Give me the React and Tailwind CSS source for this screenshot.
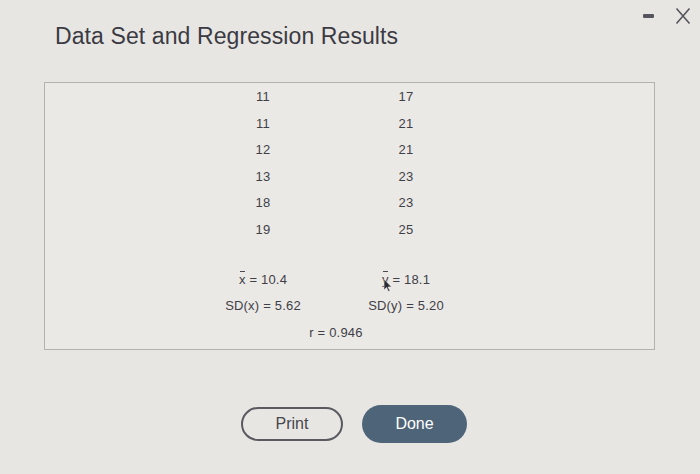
const xs = [11, 11, 12, 13, 18, 19];
const ys = [17, 21, 21, 23, 23, 25];

function Bar({ children }) {
  return (
    <span className="relative inline-block">
      <span className="absolute left-[1px] right-[1px] top-[4px] h-[1px] bg-[#4a4a52]" />
      {children}
    </span>
  );
}

export default function App() {
  return (
    <div
      className="relative w-[700px] h-[474px] overflow-hidden bg-[#e8e6e2] text-[#3f3f47]"
      style={{ fontFamily: '"Liberation Sans", Arial, sans-serif' }}
    >
      {/* window controls */}
      <div className="absolute right-[9px] top-[7px] flex items-center gap-[21px]">
        <div className="w-[11px] h-[4px] rounded-[1px] bg-[#55555d]" />
        <svg width="16" height="18" viewBox="0 0 16 18">
          <path d="M1.5 1.5 L14.5 16.5 M14.5 1.5 L1.5 16.5" stroke="#55555d" strokeWidth="1.6" fill="none" />
        </svg>
      </div>

      <div className="pl-[55px] pt-[23px] text-[23px] leading-[27px] tracking-[0.1px] text-[#3b3b44]">
        Data Set and Regression Results
      </div>

      <div className="ml-[44px] mt-[32px] w-[611px] h-[268px] border border-[#b3b2b0] bg-[#ebe9e6] text-[13px] tracking-[0.2px]">
        <div className="flex pl-[178px] pt-[1px] gap-[63px]">
          <div className="w-[80px] flex flex-col items-center">
            {xs.map((v, i) => (
              <div key={i} className="leading-[26.6px]">{v}</div>
            ))}
          </div>
          <div className="w-[80px] flex flex-col items-center">
            {ys.map((v, i) => (
              <div key={i} className="leading-[26.6px]">{v}</div>
            ))}
          </div>
        </div>

        <div className="flex pl-[172px] mt-[23px] gap-[51px]">
          <div className="w-[92px] flex flex-col items-center">
            <div className="leading-[26.6px]"><Bar>x</Bar> = 10.4</div>
            <div className="leading-[26.6px]">SD(x) = 5.62</div>
          </div>
          <div className="relative w-[92px] flex flex-col items-center">
            <div className="leading-[26.6px]"><Bar>y</Bar> = 18.1</div>
            <div className="leading-[26.6px]">SD(y) = 5.20</div>
            <svg className="absolute left-[23px] top-[11px]" width="9" height="14" viewBox="0 0 9 14">
              <path d="M1 1 L1 12 L3.5 9.5 L5.5 13.5 L7 12.8 L5 9 L8.5 9 Z" fill="#2c2c34" stroke="#f2f2f2" strokeWidth="0.6" />
            </svg>
          </div>
        </div>
        <div className="ml-[221px] w-[140px] flex justify-center leading-[26.6px]">
          r = 0.946
        </div>
      </div>

      <div className="flex items-center gap-[19px] pl-[241px] mt-[55px]">
        <button className="w-[102px] h-[34px] rounded-full border-2 border-[#5a5a60] text-[16px] text-[#47474e]">
          Print
        </button>
        <button className="w-[105px] h-[38px] rounded-full bg-[#4e6479] text-[16px] text-white">
          Done
        </button>
      </div>
    </div>
  );
}
